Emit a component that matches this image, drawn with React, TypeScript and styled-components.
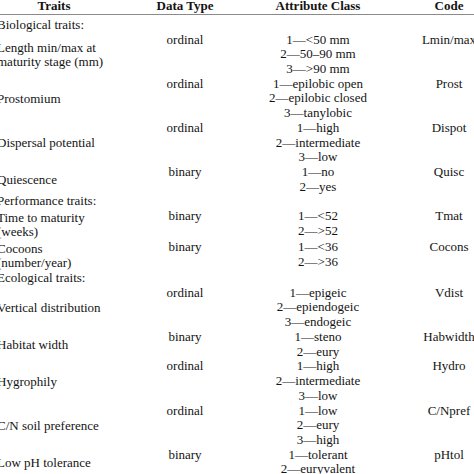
import React from "react";
import styled, { createGlobalStyle } from "styled-components";

const Global = createGlobalStyle`
  html, body {
    margin: 0;
    padding: 0;
    background: #ffffff;
    overflow: hidden;
  }
  body {
    font-family: "Liberation Serif", "Times New Roman", serif;
    color: #141414;
  }
`;

const LINE = 14.72;

const Table = styled.div`
  display: grid;
  grid-template-columns: 114px 148px 118px 144px;
  margin-left: -3px;
  margin-top: -1px;
  font-size: 13px;
  line-height: ${LINE}px;
  width: 524px;
`;

const HeaderCell = styled.div`
  font-weight: bold;
  text-align: center;
  white-space: nowrap;
  padding-bottom: 0.5px;
  border-bottom: 1px solid #8a8a8a;
  margin-bottom: 2.6px;
`;

const GroupLabel = styled.div`
  grid-column: 1 / -1;
  white-space: nowrap;
`;

const TraitCell = styled.div`
  align-self: center;
  white-space: nowrap;
  padding-top: 1.5px;
`;

const TopCell = styled.div`
  align-self: start;
  text-align: center;
  white-space: nowrap;
`;

const ValuesCell = styled.div`
  display: flex;
  flex-direction: column;
  align-items: center;
  white-space: nowrap;
`;

const Line = styled.div`
  height: ${LINE}px;
`;

type Row =
  | { kind: "group"; label: string }
  | {
      kind: "trait";
      trait: string[];
      type: string;
      values: string[];
      code: string;
    };

const rows: Row[] = [
  { kind: "group", label: "Biological traits:" },
  {
    kind: "trait",
    trait: ["Length min/max at", "maturity stage (mm)"],
    type: "ordinal",
    values: ["1\u2014<50 mm", "2\u201450\u201390 mm", "3\u2014>90 mm"],
    code: "Lmin/max",
  },
  {
    kind: "trait",
    trait: ["Prostomium"],
    type: "ordinal",
    values: ["1\u2014epilobic open", "2\u2014epilobic closed", "3\u2014tanylobic"],
    code: "Prost",
  },
  {
    kind: "trait",
    trait: ["Dispersal potential"],
    type: "ordinal",
    values: ["1\u2014high", "2\u2014intermediate", "3\u2014low"],
    code: "Dispot",
  },
  {
    kind: "trait",
    trait: ["Quiescence"],
    type: "binary",
    values: ["1\u2014no", "2\u2014yes"],
    code: "Quisc",
  },
  { kind: "group", label: "Performance traits:" },
  {
    kind: "trait",
    trait: ["Time to maturity", "(weeks)"],
    type: "binary",
    values: ["1\u2014<52", "2\u2014>52"],
    code: "Tmat",
  },
  {
    kind: "trait",
    trait: ["Cocoons", "(number/year)"],
    type: "binary",
    values: ["1\u2014<36", "2\u2014>36"],
    code: "Cocons",
  },
  { kind: "group", label: "Ecological traits:" },
  {
    kind: "trait",
    trait: ["Vertical distribution"],
    type: "ordinal",
    values: ["1\u2014epigeic", "2\u2014epiendogeic", "3\u2014endogeic"],
    code: "Vdist",
  },
  {
    kind: "trait",
    trait: ["Habitat width"],
    type: "binary",
    values: ["1\u2014steno", "2\u2014eury"],
    code: "Habwidth",
  },
  {
    kind: "trait",
    trait: ["Hygrophily"],
    type: "ordinal",
    values: ["1\u2014high", "2\u2014intermediate", "3\u2014low"],
    code: "Hydro",
  },
  {
    kind: "trait",
    trait: ["C/N soil preference"],
    type: "ordinal",
    values: ["1\u2014low", "2\u2014eury", "3\u2014high"],
    code: "C/Npref",
  },
  {
    kind: "trait",
    trait: ["Low pH tolerance"],
    type: "binary",
    values: ["1\u2014tolerant", "2\u2014euryvalent"],
    code: "pHtol",
  },
];

export default function App() {
  return (
    <>
      <Global />
      <Table>
        <HeaderCell>Traits</HeaderCell>
        <HeaderCell>Data Type</HeaderCell>
        <HeaderCell>Attribute Class</HeaderCell>
        <HeaderCell>Code</HeaderCell>
        {rows.map((r, i) =>
          r.kind === "group" ? (
            <GroupLabel key={i}>{r.label}</GroupLabel>
          ) : (
            <React.Fragment key={i}>
              <TraitCell>
                {r.trait.map((t, j) => (
                  <Line key={j}>{t}</Line>
                ))}
              </TraitCell>
              <TopCell>{r.type}</TopCell>
              <ValuesCell>
                {r.values.map((v, j) => (
                  <Line key={j}>{v}</Line>
                ))}
              </ValuesCell>
              <TopCell>{r.code}</TopCell>
            </React.Fragment>
          )
        )}
      </Table>
    </>
  );
}
